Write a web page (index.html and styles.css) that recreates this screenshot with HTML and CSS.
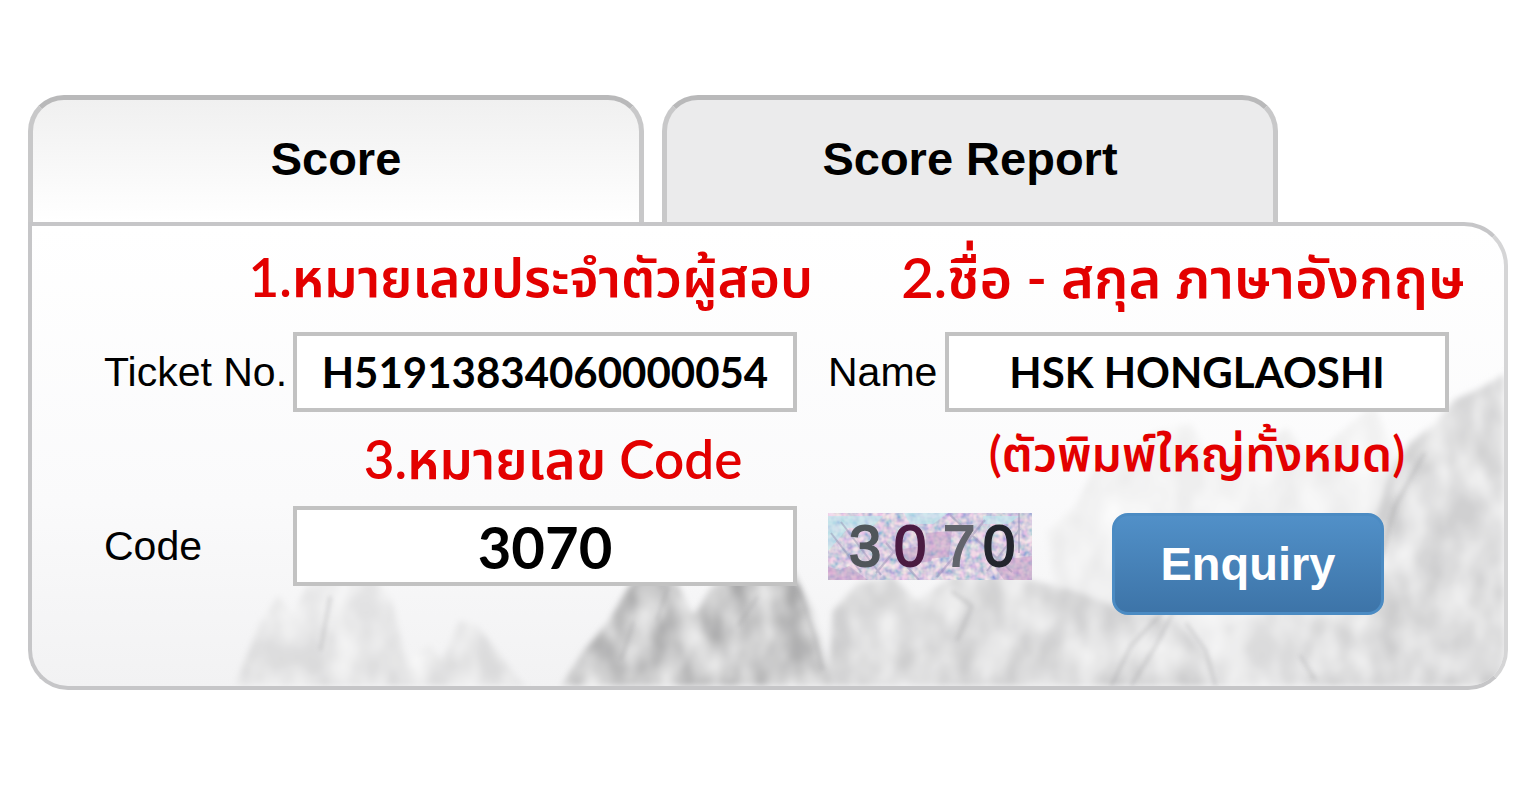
FILE: index.html
```html
<!DOCTYPE html>
<html lang="th">
<head>
<meta charset="utf-8">
<meta name="viewport" content="width=device-width, initial-scale=1">
<title>Score Enquiry</title>
<link rel="stylesheet" href="styles.css">
</head>
<body>
<main class="enquiry">
  <nav class="tabs" lang="en">
    <button class="tab tab-active" type="button">Score</button>
    <button class="tab" type="button">Score Report</button>
  </nav>
  <section class="panel">
    <svg class="scenery" viewBox="0 0 1480 466" preserveAspectRatio="none" aria-hidden="true">
      <defs>
        <filter id="rock" x="-5%" y="-5%" width="110%" height="110%">
          <feTurbulence type="fractalNoise" baseFrequency="0.04 0.022" numOctaves="4" seed="8" result="n"/>
          <feColorMatrix in="n" type="matrix" values="0 0 0 0 1  0 0 0 0 1  0 0 0 0 1  1.3 0 0 0 -0.35" result="light"/>
          <feComposite in="light" in2="SourceAlpha" operator="in" result="veins"/>
          <feMerge result="m"><feMergeNode in="SourceGraphic"/><feMergeNode in="veins"/></feMerge>
          <feGaussianBlur in="m" stdDeviation="3"/>
        </filter>
        <filter id="soft"><feGaussianBlur stdDeviation="2"/></filter>
        <linearGradient id="pale" x1="0" y1="0" x2="0" y2="1"><stop offset="0" stop-color="#e6e6e7"/><stop offset="1" stop-color="#d8d8d9"/></linearGradient>
        <linearGradient id="mid" x1="0" y1="0" x2="0" y2="1"><stop offset="0" stop-color="#d3d3d4"/><stop offset="1" stop-color="#cbcbcc"/></linearGradient>
        <linearGradient id="dark" x1="0" y1="0" x2="0" y2="1"><stop offset="0" stop-color="#a2a2a3"/><stop offset="1" stop-color="#b4b4b5"/></linearGradient>
        <linearGradient id="far" x1="0" y1="0" x2="0" y2="1"><stop offset="0" stop-color="#f0f0f0"/><stop offset="1" stop-color="#e6e6e7"/></linearGradient>
      </defs>
      <g filter="url(#rock)">
        <path fill="url(#far)" d="M1020 310 L1048 285 L1068 246 L1100 232 L1130 208 L1165 200 L1190 240 L1240 220 L1262 204 L1285 235 L1350 180 L1370 235 L1370 466 L1050 466 L1030 380Z"/>
        <path fill="url(#pale)" d="M204 466 L230 400 L248 375 L262 395 L280 355 L310 350 L340 350 L362 380 L376 440 L400 425 L412 440 L430 400 L448 405 L475 440 L495 466Z"/>
        <path fill="url(#mid)" d="M800 466 L805 390 L830 362 L865 355 L890 380 L925 355 L970 350 L1050 370 L1090 385 L1150 400 L1210 466Z"/>
        <path fill="url(#pale)" d="M1180 466 L1200 405 L1240 392 L1300 380 L1330 330 L1350 290 L1480 250 L1480 466Z"/>
        <path fill="url(#mid)" d="M1275 466 L1285 400 L1320 390 L1355 340 L1350 300 L1365 250 L1385 220 L1410 200 L1430 176 L1455 165 L1480 150 L1480 466Z"/>
        <path fill="url(#dark)" d="M532 466 L555 430 L580 400 L600 365 L625 338 L645 355 L665 395 L690 355 L730 335 L765 350 L785 390 L805 466Z"/>
      </g>
      <g fill="none" stroke="#8f8f92" stroke-width="3" opacity=".3" filter="url(#soft)">
        <path d="M1085 466 L1105 425 L1140 388 M1105 466 L1130 425 L1148 390 M1160 402 L1180 430 L1190 466 M1340 300 L1320 360 M1400 230 L1370 285 L1355 340 M925 370 L945 385 L930 420 M770 365 L785 410 L795 450 M710 405 L730 375 M605 400 L592 440 M1275 435 L1290 460 M640 365 L628 400 M300 375 L290 430"/>
      </g>
    </svg>
    <form class="form">
      <p class="hint hint-ticket">1.หมายเลขประจำตัวผู้สอบ</p>
      <p class="hint hint-name">2.ชื่อ - สกุล ภาษาอังกฤษ</p>

      <label class="label" for="ticket" lang="en">Ticket No.</label>
      <input class="field" id="ticket" type="text" value="H51913834060000054">
      <label class="label label-name" for="name" lang="en">Name</label>
      <input class="field" id="name" type="text" value="HSK HONGLAOSHI">

      <p class="hint hint-code">3.หมายเลข Code</p>
      <p class="hint hint-caps">(ตัวพิมพ์ใหญ่ทั้งหมด)</p>

      <label class="label" for="code" lang="en">Code</label>
      <input class="field field-code" id="code" type="text" value="3070">
      <div class="actions">
        <svg class="captcha" viewBox="0 0 204 67" role="img" aria-label="3070">
          <defs>
            <filter id="speckle" x="0" y="0" width="100%" height="100%">
              <feTurbulence type="fractalNoise" baseFrequency="0.16" numOctaves="2" seed="5"/>
              <feColorMatrix type="matrix" values="1.5 0 0 0 -0.06  0.7 0.6 0 0 -0.02  0.4 0 0.2 0 0.46  0 0 0 0 1"/>
            </filter>
          </defs>
          <rect width="204" height="67" fill="#d2c5dc"/>
          <rect width="204" height="67" filter="url(#speckle)" opacity=".7"/>
          <path d="M0 3h55l-12 12H20L0 38zM76 0h44l-15 11H82zM155 3h37l-12 8h-25z" fill="#bcebf0" opacity=".6"/>
          <path d="M0 67V54l12 3 9-4 19 14zM68 37l20-3 20 2-5 12-21 3zM98 20l26-2-3 26-25 2zM163 48l41-5v24h-28z" fill="#bd8fbb" opacity=".4"/>
          <path d="M3 20l30 39M13 9l40 53M58 30l33 37M48 60l28-33M109 64l48-57M122 2l62 57M159 58l33-42M191 0v40" fill="none" stroke="#9993b5" stroke-width="2" opacity=".5"/>
          <g class="digits">
            <text x="21" y="53" fill="#50565b" stroke="#50565b">3</text>
            <text x="66" y="53" fill="#4b1b42" stroke="#4b1b42">0</text>
            <text x="115" y="53" fill="#62646c" stroke="#62646c">7</text>
            <text x="155" y="53" fill="#23262e" stroke="#23262e">0</text>
          </g>
        </svg>
        <button class="submit" type="submit" lang="en">Enquiry</button>
      </div>
    </form>
  </section>
</main>
</body>
</html>
```
FILE: styles.css
```css
* { box-sizing: border-box; }

body {
  margin: 0;
  background: #fff;
  color: #000;
  font-family: "Liberation Sans", Arial, sans-serif;
}

.enquiry { padding: 95px 28px 0; }

.tabs {
  display: flex;
  gap: 18px;
  padding-right: 230px;
}

.tab {
  flex: 1;
  height: 127px;
  padding: 0 0 4px;
  border: 5px solid #c8c8c9;
  border-top-color: #b9b9ba;
  border-bottom: 0;
  border-radius: 36px 36px 0 0;
  background: #ebebec;
  color: #000;
  font: bold 47px/54px "Liberation Sans", Arial, sans-serif;
}

.tab-active { background: linear-gradient(#f0f0f0, #fff); }

.panel {
  position: relative;
  overflow: hidden;
  border: 4px solid #c6c6c8;
  border-right-color: #d5d5d6;
  border-radius: 0 44px 40px 40px;
  background: linear-gradient(#fff 0%, #fafafb 60%, #f2f2f3 100%);
}

.scenery {
  position: absolute;
  inset: 0;
  width: 100%;
  height: 100%;
}

.form {
  position: relative;
  display: grid;
  grid-template-columns: 189px 1fr 148px 1fr;
  grid-template-rows: 106px 80px 94px auto;
  align-items: center;
  padding: 0 55px 72px 72px;
}

.label { font-size: 41px; line-height: 48px; }
.label-name { padding-left: 31px; }

.field {
  width: 100%;
  height: 80px;
  padding: 0 8px;
  border: 4px solid #c2c2c2;
  border-radius: 0;
  background: #fff;
  color: #000;
  font: bold 42px/48px Lato, sans-serif;
  text-align: center;
}

.field-code { font-size: 58px; line-height: 64px; }

.hint {
  justify-self: center;
  margin: 0;
  color: #e30000;
  font: 600 53px/64px Lato, "Noto Sans Thai", "Noto Sans", sans-serif;
  white-space: nowrap;
}

.hint-ticket,
.hint-name {
  justify-self: end;
  margin-right: -16px;
  padding-bottom: 4px;
}

.hint-ticket { grid-column: 1 / 3; }
.hint-name { grid-column: 3 / 5; font-size: 56px; }
.hint-code { grid-column: 2; padding-left: 16px; }
.hint-caps {
  grid-column: 4;
  padding-bottom: 12px;
  font-size: 48px;
}

.actions {
  grid-column: 3 / 5;
  display: flex;
  align-items: flex-start;
  gap: 80px;
  height: 108px;
  padding: 7px 0 0 31px;
}

.form .label[for="code"],
.field-code { align-self: start; }
.form .label[for="code"] { line-height: 80px; }

.captcha { width: 204px; height: 67px; }

.digits {
  font: 58px "Liberation Sans", Arial, sans-serif;
  stroke-width: 2px;
}

.submit {
  width: 272px;
  height: 102px;
  padding: 0;
  border: 3px solid #4b8bc3;
  border-radius: 16px;
  background: linear-gradient(#5190c8, #3d74a8);
  color: #fff;
  font: bold 47px/54px "Liberation Sans", Arial, sans-serif;
}
```
